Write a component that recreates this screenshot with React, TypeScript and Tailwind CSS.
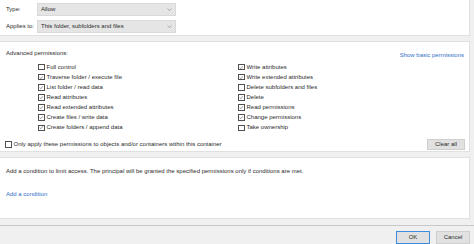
import React from "react";

const Check = ({ checked }: { checked: boolean }) => (
  <span className="w-[6.5px] h-[6.5px] border-[0.8px] border-[#505050] bg-white flex items-center justify-center shrink-0">
    {checked && (
      <svg width="5" height="5" viewBox="0 0 10 10">
        <path d="M1.5 5.2 L4 7.6 L8.6 2.2" fill="none" stroke="#444" strokeWidth="1.2" />
      </svg>
    )}
  </span>
);

const Row = ({ label, checked }: { label: string; checked: boolean }) => (
  <div className="flex items-center gap-[2px] h-[10.15px]">
    <Check checked={checked} />
    <span className="whitespace-nowrap">{label}</span>
  </div>
);

const Select = ({ value }: { value: string }) => (
  <div className="w-[139px] h-[13px] bg-[#e5e5e5] border border-[#d9d9d9] flex items-center justify-between pl-[3px] pr-[3px]">
    <span>{value}</span>
    <svg width="5" height="3" viewBox="0 0 10 6">
      <path d="M1 1 L5 5 L9 1" fill="none" stroke="#888" strokeWidth="1.3" />
    </svg>
  </div>
);

export default function App() {
  const left: [string, boolean][] = [
    ["Full control", false],
    ["Traverse folder / execute file", true],
    ["List folder / read data", true],
    ["Read attributes", true],
    ["Read extended attributes", true],
    ["Create files / write data", true],
    ["Create folders / append data", true],
  ];
  const right: [string, boolean][] = [
    ["Write attributes", true],
    ["Write extended attributes", true],
    ["Delete subfolders and files", false],
    ["Delete", true],
    ["Read permissions", true],
    ["Change permissions", true],
    ["Take ownership", false],
  ];
  return (
    <div
      className="w-[474px] h-[244px] bg-[#f0f0f0] overflow-hidden flex flex-col text-[6px] text-[#2b2b2b]"
      style={{ fontFamily: '"Liberation Sans", Arial, sans-serif' }}
    >
      <div className="w-[470px] h-[36px] bg-white border-r border-b border-[#e0e0e0] flex flex-col pt-[3px] gap-[4px]">
        <div className="flex items-center">
          <span className="w-[37px] pl-[6px]">Type:</span>
          <Select value="Allow" />
        </div>
        <div className="flex items-center">
          <span className="w-[37px] pl-[6px]">Applies to:</span>
          <Select value="This folder, subfolders and files" />
        </div>
      </div>
      <div className="h-[6px]" />
      <div className="w-[470px] h-[112px] bg-white border-r border-y border-[#e0e0e0] flex flex-col">
        <div className="flex justify-between pl-[6px] pr-[5px] pt-[7px]">
          <span>Advanced permissions:</span>
          <span className="text-[#2f6fc9] mt-[2px]">Show basic permissions</span>
        </div>
        <div className="flex pl-[38px] mt-[1.5px]">
          <div className="w-[200px] flex flex-col">
            {left.map(([l, c]) => (
              <Row key={l} label={l} checked={c} />
            ))}
          </div>
          <div className="flex flex-col">
            {right.map(([l, c]) => (
              <Row key={l} label={l} checked={c} />
            ))}
          </div>
        </div>
        <div className="flex items-center justify-between pl-[5px] pr-[4px] mt-[6px]">
          <div className="flex items-center gap-[2px]">
            <Check checked={false} />
            <span>Only apply these permissions to objects and/or containers within this container</span>
          </div>
          <div className="w-[38px] h-[11px] bg-[#e1e1e1] border border-[#cfcfcf] flex items-center justify-center">
            Clear all
          </div>
        </div>
      </div>
      <div className="h-[5px]" />
      <div className="w-[470px] h-[63px] bg-white border-r border-y border-[#e0e0e0] flex flex-col pl-[6px] pt-[9px]">
        <span>
          Add a condition to limit access. The principal will be granted the specified permissions only if conditions are met.
        </span>
        <span className="text-[#2f6fc9] mt-[14px]">Add a condition</span>
      </div>
      <div className="h-[6px]" />
      <div className="h-px bg-[#c8c8c8]" />
      <div className="flex justify-end gap-[6px] pr-[4px] pt-[5px]">
        <div className="w-[34px] h-[13px] bg-[#e1e1e1] border border-[#3c8de0] flex items-center justify-center">OK</div>
        <div className="w-[34px] h-[13px] bg-[#e1e1e1] border border-[#cfcfcf] flex items-center justify-center">Cancel</div>
      </div>
    </div>
  );
}
